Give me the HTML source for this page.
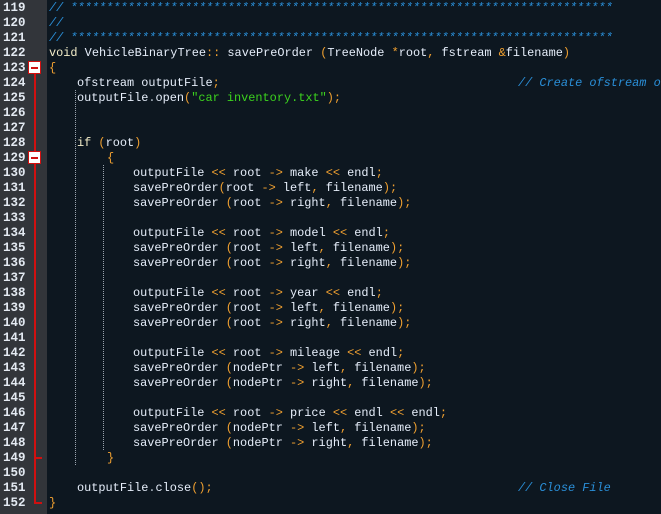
<!DOCTYPE html>
<html><head><meta charset="utf-8"><style>
html,body{margin:0;padding:0;}
body{width:661px;height:514px;overflow:hidden;background:#0d1720;position:relative;font-family:"Liberation Mono",monospace;font-size:11.75px;}
#g{position:absolute;left:0;top:0;width:47px;height:514px;background:#32353a;}
.n{position:absolute;left:3px;height:15px;line-height:15px;color:#e4eaf2;font-weight:bold;font-size:12.5px;}
.l{position:absolute;height:15px;line-height:15px;white-space:pre;color:#e6eefa;font-size:11.9px;}
.o{color:#f0a030}
.c{color:#2a8fd8;font-style:italic}
.s{color:#3cd21e}
.k{color:#f2ecc8}
.d{color:#b8c4d0}
.box{position:absolute;left:28px;width:11px;height:11px;border:1px solid #d01010;background:#fff;}
.box:after{content:"";position:absolute;left:2px;right:2px;top:5px;height:2px;background:#d01010;}
.gd{position:absolute;width:0;border-left:1px dotted #9aa4ae;}
</style></head><body>
<div id="g"></div>
<div style="position:absolute;left:34px;top:74px;width:2px;height:430px;background:#d01010"></div>
<div style="position:absolute;left:34px;top:502px;width:8px;height:2px;background:#d01010"></div>
<div style="position:absolute;left:34px;top:457px;width:8px;height:2px;background:#d01010"></div>
<div class="box" style="top:61px"></div>
<div class="box" style="top:151px"></div>
<div class="gd" style="left:75px;top:90px;height:375px"></div>
<div class="gd" style="left:103px;top:165px;height:285px"></div>
<div id="lines"></div>
<script>
var st='*'.repeat(76);
var L=[
[49,'<span class="c">// '+st+'</span>'],
[49,'<span class="c">//</span>'],
[49,'<span class="c">// '+st+'</span>'],
[49,'<span class="k">void</span> VehicleBinaryTree<span class="o">::</span> savePreOrder <span class="o">(</span>TreeNode <span class="o">*</span>root<span class="o">,</span> fstream <span class="o">&amp;</span>filename<span class="o">)</span>'],
[49,'<span class="o">{</span>'],
[77,'ofstream outputFile<span class="o">;</span>'],
[77,'outputFile<span class="d">.</span>open<span class="o">(</span><span class="s">"car inventory.txt"</span><span class="o">);</span>'],
[0,''],[0,''],
[77,'<span class="k">if</span> <span class="o">(</span>root<span class="o">)</span>'],
[107,'<span class="o">{</span>'],
[133,'outputFile <span class="o">&lt;&lt;</span> root <span class="o">-&gt;</span> make <span class="o">&lt;&lt;</span> endl<span class="o">;</span>'],
[133,'savePreOrder<span class="o">(</span>root <span class="o">-&gt;</span> left<span class="o">,</span> filename<span class="o">);</span>'],
[133,'savePreOrder <span class="o">(</span>root <span class="o">-&gt;</span> right<span class="o">,</span> filename<span class="o">);</span>'],
[0,''],
[133,'outputFile <span class="o">&lt;&lt;</span> root <span class="o">-&gt;</span> model <span class="o">&lt;&lt;</span> endl<span class="o">;</span>'],
[133,'savePreOrder <span class="o">(</span>root <span class="o">-&gt;</span> left<span class="o">,</span> filename<span class="o">);</span>'],
[133,'savePreOrder <span class="o">(</span>root <span class="o">-&gt;</span> right<span class="o">,</span> filename<span class="o">);</span>'],
[0,''],
[133,'outputFile <span class="o">&lt;&lt;</span> root <span class="o">-&gt;</span> year <span class="o">&lt;&lt;</span> endl<span class="o">;</span>'],
[133,'savePreOrder <span class="o">(</span>root <span class="o">-&gt;</span> left<span class="o">,</span> filename<span class="o">);</span>'],
[133,'savePreOrder <span class="o">(</span>root <span class="o">-&gt;</span> right<span class="o">,</span> filename<span class="o">);</span>'],
[0,''],
[133,'outputFile <span class="o">&lt;&lt;</span> root <span class="o">-&gt;</span> mileage <span class="o">&lt;&lt;</span> endl<span class="o">;</span>'],
[133,'savePreOrder <span class="o">(</span>nodePtr <span class="o">-&gt;</span> left<span class="o">,</span> filename<span class="o">);</span>'],
[133,'savePreOrder <span class="o">(</span>nodePtr <span class="o">-&gt;</span> right<span class="o">,</span> filename<span class="o">);</span>'],
[0,''],
[133,'outputFile <span class="o">&lt;&lt;</span> root <span class="o">-&gt;</span> price <span class="o">&lt;&lt;</span> endl <span class="o">&lt;&lt;</span> endl<span class="o">;</span>'],
[133,'savePreOrder <span class="o">(</span>nodePtr <span class="o">-&gt;</span> left<span class="o">,</span> filename<span class="o">);</span>'],
[133,'savePreOrder <span class="o">(</span>nodePtr <span class="o">-&gt;</span> right<span class="o">,</span> filename<span class="o">);</span>'],
[107,'<span class="o">}</span>'],
[0,''],
[77,'outputFile<span class="d">.</span>close<span class="o">();</span>'],
[49,'<span class="o">}</span>']
];
var h='';
for(var i=0;i<L.length;i++){
 var t=i*15+1;
 h+='<div class="n" style="top:'+t+'px">'+(119+i)+'</div>';
 if(L[i][0])h+='<div class="l" style="left:'+L[i][0]+'px;top:'+t+'px">'+L[i][1]+'</div>';
}
h+='<div class="l c" style="left:518px;top:'+(5*15+1)+'px">// Create ofstream object</div>';
h+='<div class="l c" style="left:518px;top:'+(32*15+1)+'px">// Close File</div>';
document.getElementById('lines').innerHTML=h;
</script>
</body></html>
